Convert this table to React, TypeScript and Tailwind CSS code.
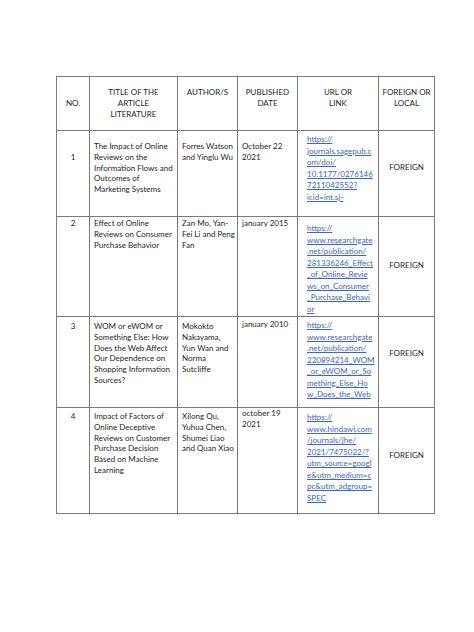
import React from "react";

const cell = "border border-[#7a7a7a] align-top p-0";

function Lines({ lines }: { lines: string[] }) {
  return (
    <>
      {lines.map((l, i) => (
        <div key={i} className="whitespace-nowrap">
          {l}
        </div>
      ))}
    </>
  );
}

function Link({ lines }: { lines: string[] }) {
  return (
    <div className="leading-[11.5px] text-[#3b66c4]">
      {lines.map((l, i) => (
        <div key={i} className="whitespace-nowrap">
          <span className="underline decoration-[#3b66c4]">{l}</span>
        </div>
      ))}
    </div>
  );
}

const rows = [
  {
    no: "1",
    h: "h-[86px]",
    noPt: "pt-[21px]",
    pt: "pt-[10px]",
    datePt: "pt-[10px]",
    urlPt: "pt-[3px]",
    fPt: "pt-[31px]",
    title: ["The Impact of Online", "Reviews on the", "Information Flows and", "Outcomes of", "Marketing Systems"],
    authors: ["Forres Watson", "and Yinglu Wu"],
    date: ["October 22", "2021"],
    url: ["https://", "journals.sagepub.c", "om/doi/", "10.1177/0276146", "7211042552?", "icid=int.sj-"],
  },
  {
    no: "2",
    h: "h-[100px]",
    noPt: "pt-[1px]",
    pt: "pt-[1px]",
    datePt: "pt-[1px]",
    urlPt: "pt-[6px]",
    fPt: "pt-[43px]",
    title: ["Effect of Online", "Reviews on Consumer", "Purchase Behavior"],
    authors: ["Zan Mo, Yan-", "Fei Li and Peng", "Fan"],
    date: ["january 2015"],
    url: [
      "https://",
      "www.researchgate",
      ".net/publication/",
      "281336246_Effect",
      "_of_Online_Revie",
      "ws_on_Consumer",
      "_Purchase_Behavi",
      "or",
    ],
  },
  {
    no: "3",
    h: "h-[91px]",
    noPt: "pt-[4px]",
    pt: "pt-[4px]",
    datePt: "pt-[2px]",
    urlPt: "pt-[3px]",
    fPt: "pt-[31px]",
    title: [
      "WOM or eWOM or",
      "Something Else: How",
      "Does the Web Affect",
      "Our Dependence on",
      "Shopping Information",
      "Sources?",
    ],
    authors: ["Mokokto", "Nakayama,", "Yun Wan and", "Norma", "Sutcliffe"],
    date: ["january 2010"],
    url: [
      "https://",
      "www.researchgate",
      ".net/publication/",
      "220894214_WOM",
      "_or_eWOM_or_So",
      "mething_Else_Ho",
      "w_Does_the_Web",
    ],
  },
  {
    no: "4",
    h: "h-[106px]",
    noPt: "pt-[3px]",
    pt: "pt-[3px]",
    datePt: "pt-[0px]",
    urlPt: "pt-[4px]",
    fPt: "pt-[42px]",
    title: [
      "Impact of Factors of",
      "Online Deceptive",
      "Reviews on Customer",
      "Purchase Decision",
      "Based on Machine",
      "Learning",
    ],
    authors: ["Xilong Qu,", "Yuhua Chen,", "Shumei Liao", "and Quan Xiao"],
    date: ["october 19", "2021"],
    url: [
      "https://",
      "www.hindawi.com",
      "/journals/jhe/",
      "2021/7475022/?",
      "utm_source=googl",
      "e&utm_medium=c",
      "pc&utm_adgroup=",
      "SPEC",
    ],
  },
];

export default function App() {
  return (
    <div className="min-h-[632px] w-[474px] bg-white pl-[56px] pt-[76px] font-['Lato','Liberation_Sans',sans-serif] text-[8px] leading-[10.8px] text-[#1e1e1e]">
      <table className="table-fixed border-collapse">
        <colgroup>
          <col className="w-[33px]" />
          <col className="w-[88px]" />
          <col className="w-[60px]" />
          <col className="w-[60px]" />
          <col className="w-[81px]" />
          <col className="w-[56px]" />
        </colgroup>
        <tbody>
          {/* header */}
          <tr className="h-[54px]">
            <td className={`${cell} pt-[21px] text-center`}>NO.</td>
            <td className={`${cell} pt-[10px] text-center`}>
              <Lines lines={["TITLE OF THE", "ARTICLE", "LITERATURE"]} />
            </td>
            <td className={`${cell} pt-[10px] text-center`}>AUTHOR/S</td>
            <td className={`${cell} pt-[10px] text-center`}>
              <Lines lines={["PUBLISHED", "DATE"]} />
            </td>
            <td className={`${cell} pt-[10px] text-center`}>
              <Lines lines={["URL OR", "LINK"]} />
            </td>
            <td className={`${cell} pt-[10px] text-center`}>
              <Lines lines={["FOREIGN OR", "LOCAL"]} />
            </td>
          </tr>

          {rows.map((r) => (
            <tr key={r.no} className={r.h}>
              <td className={`${cell} ${r.noPt} text-center`}>{r.no}</td>
              <td className={`${cell} ${r.pt} pl-[4px]`}>
                <Lines lines={r.title} />
              </td>
              <td className={`${cell} ${r.pt} pl-[4px]`}>
                <Lines lines={r.authors} />
              </td>
              <td className={`${cell} ${r.datePt} pl-[4px]`}>
                <Lines lines={r.date} />
              </td>
              <td className={`${cell} ${r.urlPt} pl-[9px]`}>
                <Link lines={r.url} />
              </td>
              <td className={`${cell} ${r.fPt} text-center`}>FOREIGN</td>
            </tr>
          ))}
        </tbody>
      </table>
    </div>
  );
}
